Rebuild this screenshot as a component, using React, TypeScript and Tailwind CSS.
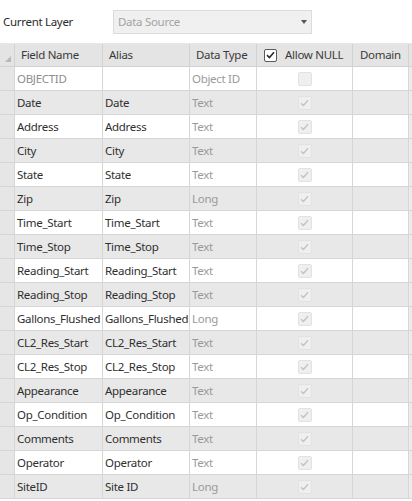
import React from 'react';

type Field = { name: string; alias: string; type: string; nullable: boolean };

const fields: Field[] = [
  { name: 'OBJECTID', alias: '', type: 'Object ID', nullable: false },
  { name: 'Date', alias: 'Date', type: 'Text', nullable: true },
  { name: 'Address', alias: 'Address', type: 'Text', nullable: true },
  { name: 'City', alias: 'City', type: 'Text', nullable: true },
  { name: 'State', alias: 'State', type: 'Text', nullable: true },
  { name: 'Zip', alias: 'Zip', type: 'Long', nullable: true },
  { name: 'Time_Start', alias: 'Time_Start', type: 'Text', nullable: true },
  { name: 'Time_Stop', alias: 'Time_Stop', type: 'Text', nullable: true },
  { name: 'Reading_Start', alias: 'Reading_Start', type: 'Text', nullable: true },
  { name: 'Reading_Stop', alias: 'Reading_Stop', type: 'Text', nullable: true },
  { name: 'Gallons_Flushed', alias: 'Gallons_Flushed', type: 'Long', nullable: true },
  { name: 'CL2_Res_Start', alias: 'CL2_Res_Start', type: 'Text', nullable: true },
  { name: 'CL2_Res_Stop', alias: 'CL2_Res_Stop', type: 'Text', nullable: true },
  { name: 'Appearance', alias: 'Appearance', type: 'Text', nullable: true },
  { name: 'Op_Condition', alias: 'Op_Condition', type: 'Text', nullable: true },
  { name: 'Comments', alias: 'Comments', type: 'Text', nullable: true },
  { name: 'Operator', alias: 'Operator', type: 'Text', nullable: true },
  { name: 'SiteID', alias: 'Site ID', type: 'Long', nullable: true },
];

const COLS = 'grid grid-cols-[15px_88px_87px_67px_96px_56px_3px]';

function Check({ dark }: { dark?: boolean }) {
  return (
    <svg width="9" height="8" viewBox="0 0 9 8" fill="none">
      <path
        d="M1 4.2 L3.4 6.5 L8 1.2"
        stroke={dark ? '#2b2b2b' : '#c2c2c2'}
        strokeWidth={dark ? 1.6 : 1.3}
      />
    </svg>
  );
}

function HeaderRow() {
  const cell = 'flex items-center whitespace-nowrap overflow-hidden border-r border-b border-[#d2d2d2] bg-[#e4e4e4] text-[#3a3a3a]';
  return (
    <div className={`${COLS} h-[23px]`}>
      <div className={`${cell} items-end justify-end pr-[3px] pb-[4px]`}>
        <svg width="6" height="6" viewBox="0 0 6 6">
          <path d="M6 0 L6 6 L0 6 Z" fill="#b8b8b8" />
        </svg>
      </div>
      <div className={`${cell} pl-[6px]`}>Field Name</div>
      <div className={`${cell} pl-[6px]`}>Alias</div>
      <div className={`${cell} pl-[6px]`}>Data Type</div>
      <div className={`${cell} pl-[7px] gap-[8px]`}>
        <span className="flex h-[13px] w-[13px] shrink-0 items-center justify-center rounded-[2px] border border-[#5a5a5a] bg-white">
          <Check dark />
        </span>
        Allow NULL
      </div>
      <div className={`${cell} pl-[7px]`}>Domain</div>
      <div className="border-b border-[#d2d2d2] bg-[#e4e4e4]" />
    </div>
  );
}

function FieldRow({ field, index }: { field: Field; index: number }) {
  const bg = index % 2 === 0 ? 'bg-white' : 'bg-[#e8e8e8]';
  const cell = `flex items-center whitespace-nowrap overflow-hidden border-r border-b border-[#d6d6d6] ${bg}`;
  const isOid = field.type === 'Object ID';
  return (
    <div className={`${COLS} h-[24px]`}>
      <div className="border-r border-b border-[#d6d6d6] bg-[#e6e6e6]" />
      <div className={`${cell} pl-[2px] ${isOid ? 'text-[#8e8e8e]' : 'text-[#2f2f2f]'}`}>{field.name}</div>
      <div className={`${cell} pl-[2px] text-[#2f2f2f]`}>{field.alias}</div>
      <div className={`${cell} pl-[2px] text-[#9a9a9a]`}>{field.type}</div>
      <div className={`${cell} justify-center`}>
        <span className="flex h-[14px] w-[14px] items-center justify-center rounded-[2px] border border-[#e2e2e2] bg-[#efefef]">
          {field.nullable && <Check />}
        </span>
      </div>
      <div className={cell} />
      <div className="border-b border-[#d6d6d6] bg-[#ececec]" />
    </div>
  );
}

export default function App() {
  return (
    <div
      className="h-[501px] w-[412px] overflow-hidden bg-white text-[11.5px] tracking-[-0.3px]"
      style={{ fontFamily: '"Noto Sans", "Open Sans", sans-serif' }}
    >
      <div className="flex h-[43px] items-center">
        <div className="w-[113px] pl-[3px] text-[#2a2a2a]">Current Layer</div>
        <div className="flex h-[24px] w-[199px] items-center justify-between border border-[#dcdcdc] bg-[#f0f0f0] pl-[4px] pr-[4px] text-[#a3a3a3]">
          <span>Data Source</span>
          <svg width="6" height="4" viewBox="0 0 6 4">
            <path d="M0 0 L6 0 L3 4 Z" fill="#555" />
          </svg>
        </div>
      </div>
      <div className="border-t border-[#e6e6e6]">
        <HeaderRow />
        {fields.map((f, i) => (
          <FieldRow key={f.name} field={f} index={i} />
        ))}
      </div>
    </div>
  );
}
